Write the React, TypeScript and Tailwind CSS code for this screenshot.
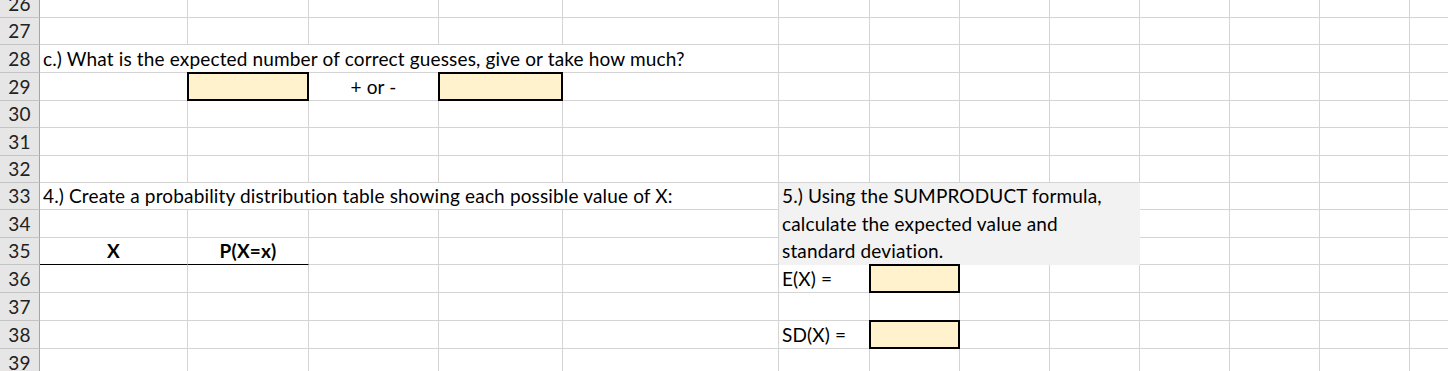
type Cell = {
  span?: number;
  text?: string;
  kind?: 'text' | 'center' | 'head' | 'box' | 'gray';
};

type Row = { n: number; h: 'h-[27px]' | 'h-[28px]'; cells: Cell[] };

const COLS = 14 - 1;

function fill(cells: Cell[]): Cell[] {
  const used = cells.reduce((s, c) => s + (c.span ?? 1), 0);
  return [...cells, ...Array.from({ length: COLS - used }, () => ({}))];
}

const empty = (n: number) => Array.from({ length: n }, () => ({}) as Cell);

const rows: Row[] = [
  { n: 26, h: 'h-[28px]', cells: [] },
  { n: 27, h: 'h-[27px]', cells: [] },
  {
    n: 28,
    h: 'h-[28px]',
    cells: [{ span: 5, kind: 'text', text: 'c.) What is the expected number of correct guesses, give or take how much?' }],
  },
  {
    n: 29,
    h: 'h-[28px]',
    cells: [{}, { kind: 'box' }, { kind: 'center', text: '+ or -' }, { kind: 'box' }],
  },
  { n: 30, h: 'h-[27px]', cells: [] },
  { n: 31, h: 'h-[28px]', cells: [] },
  { n: 32, h: 'h-[27px]', cells: [] },
  {
    n: 33,
    h: 'h-[27px]',
    cells: [
      { span: 5, kind: 'text', text: '4.) Create a probability distribution table showing each possible value of X:' },
      { span: 4, kind: 'gray', text: '5.) Using the SUMPRODUCT formula,' },
    ],
  },
  {
    n: 34,
    h: 'h-[28px]',
    cells: [...empty(5), { span: 4, kind: 'gray', text: 'calculate the expected value and' }],
  },
  {
    n: 35,
    h: 'h-[27px]',
    cells: [
      { kind: 'head', text: 'X' },
      { kind: 'head', text: 'P(X=x)' },
      ...empty(3),
      { span: 4, kind: 'gray', text: 'standard deviation.' },
    ],
  },
  {
    n: 36,
    h: 'h-[28px]',
    cells: [...empty(5), { kind: 'text', text: 'E(X) =' }, { kind: 'box' }],
  },
  { n: 37, h: 'h-[28px]', cells: [] },
  {
    n: 38,
    h: 'h-[28px]',
    cells: [...empty(5), { kind: 'text', text: 'SD(X) =' }, { kind: 'box' }],
  },
  { n: 39, h: 'h-[28px]', cells: [] },
];

const spans: Record<number, string> = { 1: '', 4: 'col-span-4', 5: 'col-span-5' };

function SheetCell({ cell }: { cell: Cell }) {
  const span = spans[cell.span ?? 1];
  switch (cell.kind) {
    case 'box':
      // medium border sits on the gridlines, so it reaches 1px over the left/top ones
      return <div className={`${span} -mt-px -ml-px border-2 border-black bg-[#fff2cc]`} />;
    case 'gray':
      return (
        <div className={`${span} flex items-center border-b border-[#f2f2f2] bg-[#f2f2f2] pl-[3px] whitespace-nowrap`}>
          {cell.text}
        </div>
      );
    case 'head':
      return (
        <div className={`${span} flex items-center justify-center border-r border-b border-r-[#d4d4d4] border-b-black font-bold`}>
          {cell.text}
        </div>
      );
    case 'center':
      return (
        <div className={`${span} flex items-center justify-center border-r border-b border-[#d4d4d4]`}>
          {cell.text}
        </div>
      );
    case 'text':
      return (
        <div className={`${span} flex items-center border-r border-b border-[#d4d4d4] pl-[3px] whitespace-nowrap`}>
          {cell.text}
        </div>
      );
    default:
      return <div className="border-r border-b border-[#d4d4d4]" />;
  }
}

export default function App() {
  return (
    <div className="h-[371px] w-[1448px] overflow-hidden bg-white font-['Lato',sans-serif] text-[19px] leading-[22px] tracking-[0.15px] text-black">
      <div className="-mt-[10px]">
        {rows.map((row) => (
          <div
            key={row.n}
            className={`grid ${row.h} grid-cols-[40px_148px_121px_130px_124px_216px_91px_90px_90px_90px_90px_90px_90px_90px]`}
          >
            <div className="flex items-center justify-center border-r border-b border-r-[#a6a6a6] border-b-[#c4c4c4] bg-[#e6e6e6] text-[#222]">
              {row.n}
            </div>
            {fill(row.cells).map((cell, i) => (
              <SheetCell key={i} cell={cell} />
            ))}
          </div>
        ))}
      </div>
    </div>
  );
}
